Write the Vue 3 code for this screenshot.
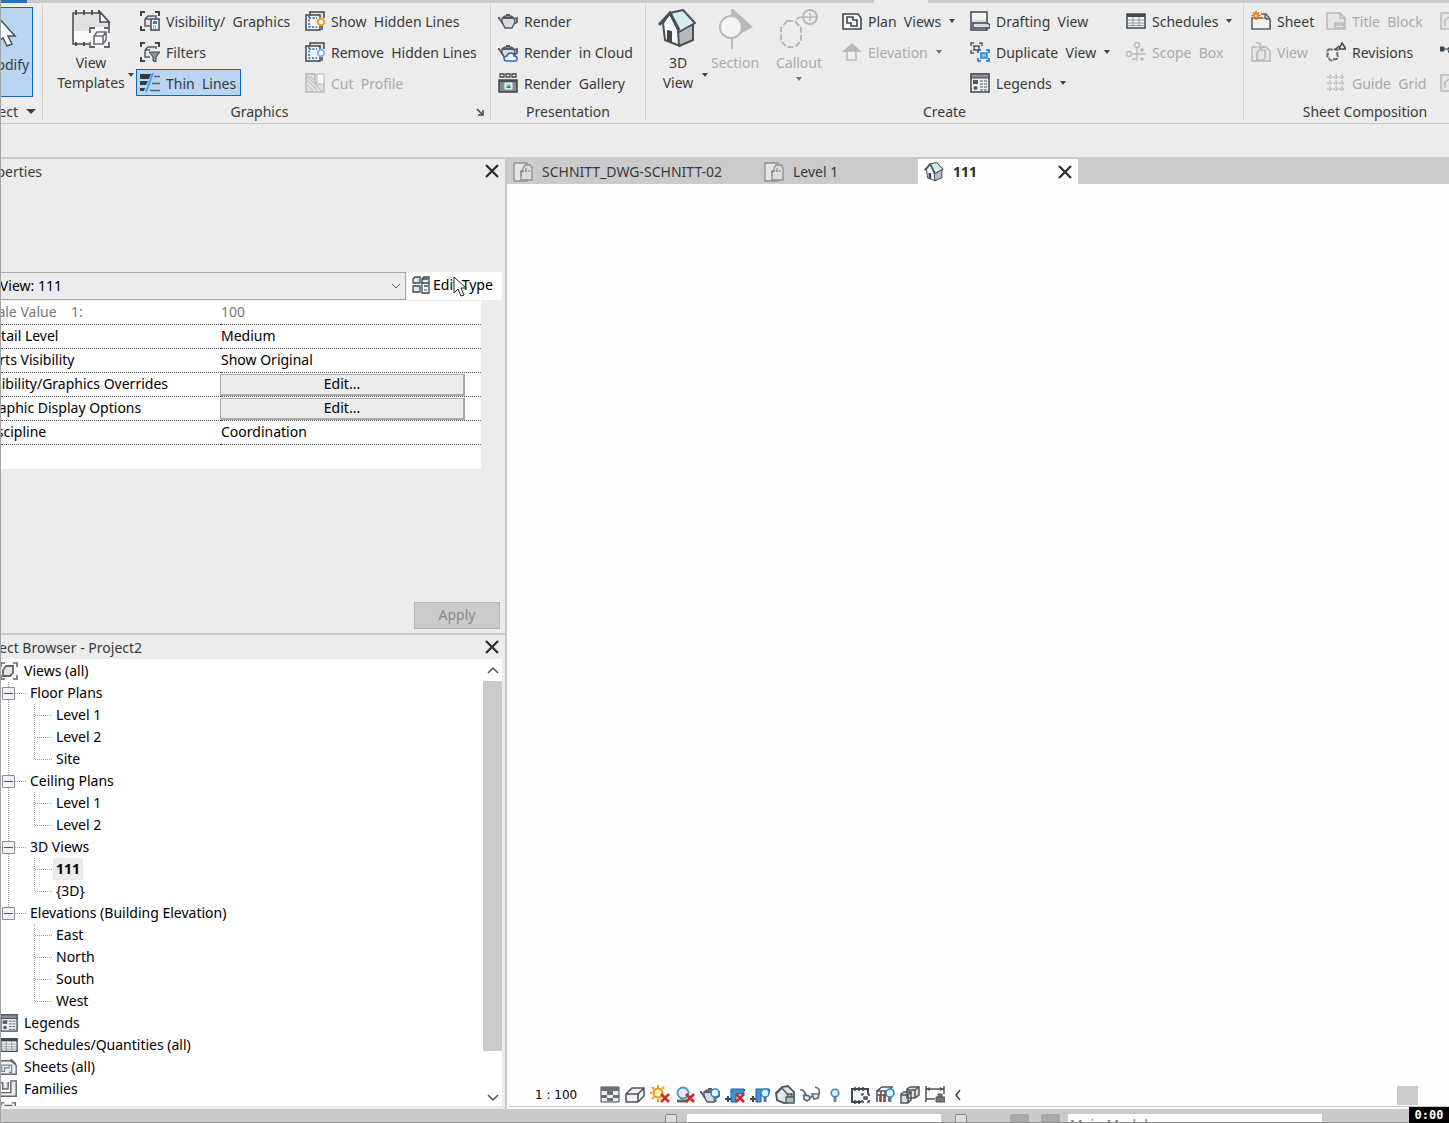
<script setup>
import { ref } from 'vue'

const D = '#3f4650'
const G = '#b9b9b9'

const house = (s) => `<g ${s}><path d="M5 14 12 4l10 11v22l-15-6z" fill="#f7f8f9" stroke="#4b5159" stroke-width="2" stroke-linejoin="round"/><path d="M20 22l15-7v16l-14 6z" fill="#b4bac4" stroke="#4b5159" stroke-width="2" stroke-linejoin="round"/><path d="M12 4 25 1l12 13-16 9z" fill="#d6ecef" stroke="#4b5159" stroke-width="2" stroke-linejoin="round"/><path d="M1 16 12 4l9 17" fill="none" stroke="#4b5159" stroke-width="3"/><path d="M9 21l5 1v12l-5-2z" fill="#3f4650"/></g>`
const brackets = `<path d="M1 5V1h4M15 1h4v4M1 15v4h4" fill="none" stroke="${D}" stroke-width="2"/><path d="M5 8l3-3h8v2M5 8v7h5M5 8h5" fill="#dfe2e4" stroke="#555c66" stroke-width="1.5"/>`
const hidden = (c) => `<path d="M5 4V1h14v6" fill="#dfe4e8" stroke="${D}" stroke-width="1.5"/><path d="M1 4h14v15H1z" fill="#f3f4f5" stroke="${D}" stroke-width="1.5"/><path d="M4 5v11h8M4 7h8" fill="none" stroke="#1668b5" stroke-width="1.5" stroke-dasharray="2 1.5"/><circle cx="16" cy="11" r="3.2" fill="#fff" stroke="${c}" stroke-width="2"/><path d="M15 15h3v4h-3z" fill="#6b7078"/>`
const teapot = `<path d="M4 7c3-3 9-3 12 0l1 4-3 6H7L4 11z" fill="#d9dce0" stroke="#555c66" stroke-width="1.4"/><path d="M5 13 1 7H0M16 8l3-1v4l-3 2M4 7h12M8 4h4" fill="none" stroke="#555c66" stroke-width="1.8"/>`
const bulb = `<circle cx="15" cy="8" r="4" fill="#e8f4ff" stroke="#2f86d6" stroke-width="1.600"/><path d="M13.500 12h3v5h-3z" fill="#5b7690"/>`
const cross = `<path d="M11 9l8 8M19 9l-8 8" stroke="#cf2a27" stroke-width="2.600"/>`
const pipe = `<path d="M0 14h6M3 11v6M14 5h6" stroke="${D}" stroke-width="2"/><path d="M6 17V4h13v5h-8v8z" fill="#3d94d8" stroke="#2a5f92"/>`

const icons = {
  template: `<path d="M2 4h28l8 9v22H2z" fill="#dfe1e3" stroke="#4b5159" stroke-width="1.6"/><path d="M3 22h34v12H3z" fill="#fafafa"/><path d="M29 3v10h9z" fill="#fff" stroke="#4b5159" stroke-width="1.6"/><path d="M5 1v5M13 1v5M21 1v5M28 1v4M5 33v4M13 33v4" stroke="#4b5159" stroke-width="2"/><path d="M18 18h22v21H18z" fill="#f7f7f7"/><path d="M19 24v-5h5M33 19h5v5M38 33v5h-5M24 38h-5v-5" fill="none" stroke="#62676f" stroke-width="1.8"/><path d="M23 27l3-4h9v8l-3 4h-9zM23 27h9v8M32 27l3-4" fill="#fff" stroke="#6c7178" stroke-width="1.600"/>`,
  visibility: brackets + `<path d="M11 8h8v11h-8z" fill="#fff" stroke="${D}" stroke-width="1.5"/><path d="M13 10h4v3h-4z" fill="#2582d2"/><path d="M13 15h4M13 17h4" stroke="${D}" stroke-dasharray="1 1"/>`,
  filters: brackets + `<path d="M9 10h11l-4 5v5l-3-1v-4z" fill="#8a9098" stroke="${D}"/>`,
  thin: `<path d="M0 1h11l-2 5H0zM0 8h8l-2 4H0zM0 15h5l-1 3H0z" fill="#333a42"/><path d="M14 3.500h6M12 10.500h8M10 17.500h10" stroke="#59616b" stroke-width="1.5"/><path d="M13 0 6 19" stroke="#45a2ee" stroke-width="2"/>`,
  show: hidden('#f59a1c'),
  remove: hidden('#78b9f0'),
  cut: `<path d="M1 1h9v9h9v9H1z" fill="#e0e0e0" stroke="${G}" stroke-width="1.500"/><path d="M2 3l9 9M2 7l10 10M5 3l4 4M2 12l6 6M11 12l6 6" stroke="${G}"/><path d="M12 1h7v10h-7z" fill="#fafafa" stroke="${G}"/>`,
  render: teapot,
  cloud: teapot + `<path d="M8 19c-3-1-2-5 1-5 1-4 7-4 7 0 4 0 4 5 1 5z" fill="#f4f8ff" stroke="#2a62c4" stroke-width="1.5"/>`,
  gallery: `<path d="M2 1h4v3H2zM8 1h4v3H8zM14 1h4v3h-4z" fill="#f5f5f5" stroke="${D}" stroke-width="1.300"/><path d="M1 7h18v12H1z" fill="#828b94" stroke="${D}" stroke-width="1.5"/><path d="M1 7h18v2H1z" fill="#444b54"/><path d="M7 10h7v6H7z" fill="#a8d5e8" stroke="#fff"/><path d="M8 15l3-3 2 3z" fill="#2f8a51"/>`,
  house: house(''),
  houseSmall: house('transform="scale(.51)"'),
  section: `<path d="M18 0 38 18 18 29v11h-2V0z" fill="#b9b9b9"/><circle cx="16" cy="18" r="11" fill="#f4f4f4" stroke="#b9b9b9" stroke-width="2"/>`,
  callout: `<path d="M8 12h8l6 7v13l-6 6H8l-6-6V19z" fill="none" stroke="#b9b9b9" stroke-width="2" stroke-dasharray="6 2"/><circle cx="31" cy="8" r="7" fill="none" stroke="#b9b9b9" stroke-width="2"/><path d="M17 10l5-2h16M31 4v8" fill="none" stroke="#b9b9b9" stroke-width="1.5"/>`,
  plan: `<path d="M1 3h15l3 4v11H1z" fill="#f2f3f4" stroke="${D}" stroke-width="1.6"/><path d="M5 6h6v3h4v6H9v-3H5z" fill="none" stroke="${D}" stroke-width="1.6"/>`,
  elevation: `<path d="M10 1 20 10H0z" fill="#b9b9b9"/><path d="M5 9h9v9H5z" fill="#f0f0f0" stroke="#b9b9b9" stroke-width="1.6"/>`,
  drafting: `<path d="M1 1h16v18H1z" fill="#f2f3f4" stroke="${D}" stroke-width="1.5"/><path d="M2 9h14v4H2z" fill="#d5dadf"/><path d="M3 12h14l3 2v3H3z" fill="#d9dce0" stroke="${D}" stroke-width="1.500"/>`,
  duplicate: `<path d="M1 4V1h3M9 1h3v3M1 8v3h3" fill="none" stroke="#555" stroke-width="1.5"/><path d="M4 4h5v4H4z" fill="none" stroke="#555" stroke-width="1.500"/><path d="M8 11V8h3M16 8h3v3M19 16v3h-3M11 19H8v-3" fill="none" stroke="#0e6cc0" stroke-width="1.600"/><path d="M11 11h6v5h-6z" fill="#7fc1f4" stroke="#2582d2" stroke-width="1.500"/>`,
  legend: `<path d="M1 1h18v18H1z" fill="#eceef0" stroke="${D}" stroke-width="1.5"/><path d="M1 1h18v4H1z" fill="#89919b" stroke="${D}"/><path d="M3 7h5v4H3z" fill="#505863"/><circle cx="5.500" cy="15" r="2" fill="#505863"/><path d="M10 8h7M10 11h7M10 14h3M14 14h3M10 17h7" stroke="#505863" stroke-dasharray="3 1"/>`,
  schedule: `<path d="M1 3h18v14H1z" fill="#f4f5f6" stroke="${D}" stroke-width="1.500"/><path d="M1 3h18v3H1z" fill="#414953"/><path d="M7 6v11M2 9h16M2 12h16M2 14.500h16M13 6v11" stroke="#8e96a0"/>`,
  scope: `<g fill="none" stroke="${G}" stroke-width="1.300"><circle cx="11" cy="3" r="2.500"/><circle cx="3" cy="12" r="2.500"/><path d="M11 6v13M6 12h14M16 6v4M14 8h4M16 15v4M14 17h4M6 17h4"/></g>`,
  sheet: `<path d="M1 7h14l4 4v7H1z" fill="#f1f3f4" stroke="#5a616a" stroke-width="1.600"/><path d="M10 3h5l4 5v10M14 3v5h5" fill="#f1f3f4" stroke="#5a616a" stroke-width="1.500"/><path d="M2 8h13v9H2z" fill="#f1f3f4"/><path d="M5 0v9M.5 4.500h9M2 1.500l6 6M8 1.500l-6 6" stroke="#ee6a13" stroke-width="1.700"/><circle cx="5" cy="4.500" r="1.500" fill="#ffd76e"/>`,
  place: `<path d="M1 5h5M12 5h3l4 4v10H1V5" fill="#e6e6e6" stroke="${G}" stroke-width="1.500"/><path d="M6 11l2-3h6v8l-2 2H6zM5 1c4-1 5 2 5 5M7 4l3 3 3-3" fill="none" stroke="${G}" stroke-width="1.6"/>`,
  title: `<path d="M1 2h13l5 5v11H1zM14 2v5h5" fill="#e6e6e6" stroke="${G}" stroke-width="1.500"/><path d="M9 12h9v5H9zM9 14h9" fill="none" stroke="${G}" stroke-width="1.500"/>`,
  revision: `<path d="M2 8c2-2 4 0 5 0 3-2 6 0 4 4 2 3 0 6-3 5-2 3-5 1-5-1-2-1-2-3-1-4-1-1-1-3 0-4z" fill="#f1f1f1" stroke="#6c727a" stroke-width="2" stroke-dasharray="5 1"/><path d="M9 8l4-4M16 1l4 6h-7z" fill="none" stroke="${D}" stroke-width="1.500"/>`,
  grid: `<path d="M4 1v18M10 1v18M16 1v18M1 4h18M1 10h18M1 16h18" stroke="${G}" stroke-width="1.300" stroke-dasharray="2 1"/>`,
  matchline: `<path d="M1 2h18v16H1z" fill="#e6e6e6" stroke="${G}" stroke-width="1.500"/><path d="M5 15V9l4-3" fill="none" stroke="${G}" stroke-width="1.500"/>`,
  viewref: `<path d="M0 5h4v4H0zM4 7h4" fill="${D}" stroke="${D}"/><circle cx="12" cy="8" r="4" fill="none" stroke="${D}"/>`,
  doc: `<path d="M1 1h13v18H1z" fill="#e2e4e5" stroke="#8d9093" stroke-width="1.3"/><path d="M10 6l2-3h5l2 3v12H8V9h2z" fill="#dadcde" stroke="#8d9093" stroke-width="1.3"/><path d="M8 9v5M9 9h9M13 6v4" fill="none" stroke="#777" stroke-dasharray="2 1"/>`,
  type: `<path d="M2 4l2-2h5v6H2zM11 4l2-2h5v6M2 11h7v6H2zM2 8V4M11 8V4h6" fill="#d7eaf0" stroke="${D}" stroke-width="1.300"/><path d="M11 8h7v10h-7z" fill="#fff" stroke="${D}" stroke-width="1.300"/><path d="M13 10h4v2h-4z" fill="#2582d2"/><path d="M13 15h3" stroke="${D}"/>`,
  views: `<path d="M1 5V1h4M13 1h4v4M17 13v4h-4M5 17H1v-4" fill="none" stroke="#62676f" stroke-width="1.6"/><path d="M3 8l3-4h7v7l-3 3H3z" fill="#dfe9ea" stroke="#62676f" stroke-width="1.8"/>`,
  sheets: `<path d="M0 3h12l6 5v10H0zM12 1l5 5v2" fill="#edf1f3" stroke="#62676f" stroke-width="1.5"/><path d="M2 8h8v3H5v4H2zM10 8h3v8h-3" fill="none" stroke="#7a8796" stroke-width="1.3"/>`,
  families: `<path d="M0 3h3v7h6V3h1M12 1h6v17H0v-4h12z" fill="#e9ecee" stroke="#62676f" stroke-width="1.6"/>`,
  detail: `<path d="M1 2h18v15H1z" fill="#eee" stroke="${D}"/><path d="M1 2h18v4H1zM1 10h6v3H1zM13 10h6v3h-6zM7 6h6v4H7zM7 13h6v3H7z" fill="#66707a"/>`,
  box: `<path d="M1 9l6-6h12v8l-6 6H1zM1 9h12v8M13 9l6-6" fill="#f2f2f2" stroke="#50565e" stroke-width="1.600"/>`,
  sun: `<circle cx="8" cy="8" r="4.500" fill="#fff3b0" stroke="#e79a20" stroke-width="2"/><path d="M8 0v3M8 14v3M0 8h2M2 2l2 2M14 2l-2 2M2 14l2-2" stroke="#e79a20" stroke-width="2"/>` + cross,
  shadow: `<circle cx="8" cy="8" r="5.500" fill="#d7edfc" stroke="#4a90cf" stroke-width="1.800"/><path d="M2 16h11" stroke="#666" stroke-width="3"/>` + cross,
  showRender: teapot + bulb,
  crop: pipe + cross,
  cropShow: pipe + bulb,
  lock3d: `<path d="M1 8 7 2l6-1 6 6v9l-10 2-7-3z" fill="#e5e7e8" stroke="#50565e" stroke-width="1.800"/><path d="M1 9l6-6 6 7" fill="none" stroke="#50565e" stroke-width="1.500"/><path d="M11 12h8v6h-8zM13 12V9h4v3" fill="#9fc3c7" stroke="#50565e" stroke-width="1.300"/>`,
  glasses: `<g fill="#e9f2f7" stroke="#5e6b78" stroke-width="1.700"><path d="M0 5h3l4 6M15 2c4 1 5 3 4 7M9 13l4-2" fill="none"/><path d="M4 10l5 1 1 3-3 2-3-2zM12 9h7l-1 4-4 1z"/></g>`,
  reveal: `<circle cx="10" cy="8" r="3.700" fill="#e8f4ff" stroke="#2f86d6" stroke-width="1.600"/><path d="M8.500 12h3v5h-3z" fill="#6b8094"/>`,
  temp: `<path d="M2 4h16v13H2z" fill="#f5f5f5" stroke="${D}" stroke-width="2"/><path d="M5 2v4M9 2v4M13 2v4M5 15v4M9 15v4" stroke="${D}" stroke-width="1.500"/><path d="M11 8h9v11h-9z" fill="#fff"/><path d="M12 11V9h2M17 9h2v2M19 15v2h-2M14 17h-2v-2M14 12h3v2h-3z" fill="none" stroke="${D}" stroke-width="1.500"/>`,
  analytic: `<path d="M2 17V6l5-4h10l-3 4v10M2 6h12M2 10h12M6 6v11M10 6v11" fill="none" stroke="#50565e" stroke-width="1.600"/><path d="M5 9v8M9 9v8" stroke="#b3332f" stroke-width="1.5"/>` + bulb,
  displace: `<path d="M7 4l3-2h9v8l-4 3H7zM7 5h8v8M15 5l4-3M1 9l3-2h7v8l-3 3H1zM1 10h7v8M8 10l3-3" fill="#dcdee0" stroke="#50565e" stroke-width="1.500"/>`,
  constraint: `<path d="M1 1v16M19 1v8M1 4h18M1 14h9" fill="none" stroke="#50565e" stroke-width="1.500"/><path d="M1 4l4-2v4zM19 4l-4-2v4z" fill="#50565e"/><path d="M11 12h9v5h-9zM13 12V9h4v3" fill="#777" stroke="#555"/>`,
  close: `<path d="M4 4l12 12M16 4 4 16" stroke="#333" stroke-width="2.400"/>`
}

const graphicsA = [['visibility', 'Visibility/  Graphics'], ['filters', 'Filters'], ['thin', 'Thin  Lines']]
const graphicsB = [['show', 'Show  Hidden Lines'], ['remove', 'Remove  Hidden Lines'], ['cut', 'Cut  Profile', true]]
const presentation = [['render', 'Render'], ['cloud', 'Render  in Cloud'], ['gallery', 'Render  Gallery']]
const createA = [['plan', 'Plan  Views', false, true], ['elevation', 'Elevation', true, true]]
const createB = [['drafting', 'Drafting  View'], ['duplicate', 'Duplicate  View', false, true], ['legend', 'Legends', false, true]]
const createC = [['schedule', 'Schedules', false, true], ['scope', 'Scope  Box', true]]
const sheetA = [['sheet', 'Sheet'], ['place', 'View', true]]
const sheetB = [['title', 'Title  Block', true], ['revision', 'Revisions'], ['grid', 'Guide  Grid', true]]
const sheetC = [['matchline', '', true], ['viewref', ''], ['matchline', '', true]]

const groups = [
  { title: 'Graphics', cls: 'g-graphics', launcher: true, big: [{ icon: 'template', lines: ['View', 'Templates'], side: true, cls: 'b-template' }], cols: [{ cls: 'c-vis', items: graphicsA }, { cls: 'c-hidden', items: graphicsB }] },
  { title: 'Presentation', cls: 'g-presentation', big: [], cols: [{ cls: '', items: presentation }] },
  { title: 'Create', cls: 'g-create', big: [
    { icon: 'house', lines: ['3D', 'View'], side: true, cls: 'b-3d' },
    { icon: 'section', lines: ['Section'], off: true, cls: 'b-section' },
    { icon: 'callout', lines: ['Callout'], off: true, below: true, cls: 'b-callout' }
  ], cols: [{ cls: 'c-plan', items: createA }, { cls: 'c-draft', items: createB }, { cls: '', items: createC }] },
  { title: 'Sheet Composition', cls: 'g-sheet', big: [], cols: [{ cls: 'c-sheet', items: sheetA }, { cls: 'c-title', items: sheetB }, { cls: '', items: sheetC }] }
]

const tabs = [
  { icon: 'doc', label: 'SCHNITT_DWG-SCHNITT-02', cls: 'wide' },
  { icon: 'doc', label: 'Level 1', cls: '' },
  { icon: 'houseSmall', label: '111', cls: 'current' }
]

const properties = [
  { name: 'Scale Value    1:', value: '100', muted: true },
  { name: 'Detail Level', value: 'Medium' },
  { name: 'Parts Visibility', value: 'Show Original' },
  { name: 'Visibility/Graphics Overrides', edit: true },
  { name: 'Graphic Display Options', edit: true },
  { name: 'Discipline', value: 'Coordination' }
]

const branches = [
  { name: 'Floor Plans', items: ['Level 1', 'Level 2', 'Site'] },
  { name: 'Ceiling Plans', items: ['Level 1', 'Level 2'] },
  { name: '3D Views', items: ['111', '{3D}'] },
  { name: 'Elevations (Building Elevation)', items: ['East', 'North', 'South', 'West'] }
]
const roots = [['legend', 'Legends'], ['schedule', 'Schedules/Quantities (all)'], ['sheets', 'Sheets (all)'], ['families', 'Families'], ['views', 'Groups']]

const viewControls = ['detail', 'box', 'sun', 'shadow', 'showRender', 'crop', 'cropShow', 'lock3d', 'glasses', 'reveal', 'temp', 'analytic', 'displace', 'constraint']
const viewType = ref('v111')
</script>

<template>
  <div class="app">
    <div class="tabstrip"><span class="file"></span><span class="active-mark"></span></div>

    <div class="ribbon">
      <section class="group g-select">
        <div class="tools">
          <button class="modify">
            <svg width="26" height="34" viewBox="0 0 26 34"><path d="M4 1v25l5-4 4 8 5-2-4-8h7z" fill="#fff" stroke="#4b5159" stroke-width="1.5" /></svg>
            <span>Modify</span>
          </button>
        </div>
        <div class="title">Select<i class="caret large"></i></div>
      </section>
      <section v-for="g in groups" :key="g.title" class="group" :class="g.cls">
        <div class="tools">
          <button v-for="b in g.big" :key="b.icon" class="big" :class="[b.cls, { off: b.off }]">
            <svg width="40" height="40" viewBox="0 0 40 40" v-html="icons[b.icon]"></svg>
            <span v-for="l in b.lines" :key="l">{{ l }}</span>
            <i v-if="b.side" class="caret beside"></i>
            <i v-if="b.below" class="caret below"></i>
          </button>
          <div v-for="(c, i) in g.cols" :key="i" class="col" :class="c.cls">
            <button v-for="(t, j) in c.items" :key="j" class="tool" :class="{ off: t[2], on: t[0] === 'thin' }">
              <svg width="20" height="20" viewBox="0 0 20 20" v-html="icons[t[0]]"></svg>
              <span>{{ t[1] }}</span>
              <i v-if="t[3]" class="caret"></i>
            </button>
          </div>
        </div>
        <div class="title">
          <span>{{ g.title }}</span>
          <svg v-if="g.launcher" class="launcher" width="8" height="8" viewBox="0 0 8 8"><path d="M1 1l5 5M7 2v5H2" fill="none" stroke="#444" stroke-width="1.500" /></svg>
        </div>
      </section>
    </div>

    <div class="options"></div>

    <div class="workspace">
      <aside class="sidebar">
        <section class="panel props">
          <header><h2 class="h-props">Properties</h2><button class="x" aria-label="Close"><svg width="20" height="20" viewBox="0 0 20 20" v-html="icons.close"></svg></button></header>
          <div class="type-row">
            <label class="combo">
              <select v-model="viewType" aria-label="View type"><option value="v111">3D View: 111</option></select>
              <svg width="10" height="6" viewBox="0 0 10 6"><path d="M1 1l4 4 4-4" fill="none" stroke="#555" /></svg>
            </label>
            <button class="edit-type">
              <svg width="20" height="20" viewBox="0 0 20 20" v-html="icons.type"></svg>Edit Type
              <svg class="pointer" width="14" height="22" viewBox="0 0 14 22"><path d="M1 1v16l4-4 3 7 3-1-3-7h5z" fill="#fff" stroke="#222" /></svg>
            </button>
          </div>
          <table>
            <tbody>
              <tr v-for="p in properties" :key="p.name" :class="{ muted: p.muted }">
                <th scope="row">{{ p.name }}</th>
                <td><button v-if="p.edit" class="edit">Edit...</button><template v-else>{{ p.value }}</template></td>
              </tr>
              <tr class="blank"><th></th><td></td></tr>
            </tbody>
          </table>
          <button class="apply" disabled>Apply</button>
        </section>

        <section class="panel browser">
          <header><h2 class="h-browser">Project Browser - Project2</h2><button class="x" aria-label="Close"><svg width="20" height="20" viewBox="0 0 20 20" v-html="icons.close"></svg></button></header>
          <div class="tree-wrap">
            <div class="tree">
              <div class="node root"><svg width="18" height="18" viewBox="0 0 18 18" v-html="icons.views"></svg><span>Views (all)</span></div>
              <template v-for="(b, i) in branches" :key="b.name">
                <div class="node">
                  <button class="toggle" :aria-label="'Collapse ' + b.name">
                    <svg width="26" height="22" viewBox="0 0 26 22">
                      <path :d="i < 3 ? 'M7.500 0V22M14 11.500H26' : 'M7.500 0V11M14 11.500H26'" fill="none" stroke="#a0a0a0" stroke-dasharray="1 1" />
                      <path d="M1.500 5.500h12v12h-12z" fill="#f4f4f4" stroke="#8d8d8d" /><path d="M3 11.500h9" stroke="#3b55a5" />
                    </svg>
                  </button>
                  <span class="branch">{{ b.name }}</span>
                </div>
                <div v-for="(n, j) in b.items" :key="n" class="node">
                  <svg width="52" height="22" viewBox="0 0 52 22">
                    <path :d="(i < 3 ? 'M7.500 0V22' : '') + (j < b.items.length - 1 ? 'M33.500 0V22' : 'M33.500 0V11') + 'M34 11.500H52'" fill="none" stroke="#a0a0a0" stroke-dasharray="1 1" />
                  </svg>
                  <span class="leaf" :class="{ open: n === '111' }">{{ n }}</span>
                </div>
              </template>
              <div v-for="r in roots" :key="r[1]" class="node root"><svg width="18" height="18" viewBox="0 0 20 20" v-html="icons[r[0]]"></svg><span>{{ r[1] }}</span></div>
            </div>
            <div class="scroll">
              <svg width="19" height="22" viewBox="0 0 19 22"><path d="M5 14l5-5 5 5" fill="none" stroke="#555" stroke-width="1.5" /></svg>
              <div class="track"><div class="thumb"></div></div>
              <svg width="19" height="18" viewBox="0 0 19 18"><path d="M5 7l5 5 5-5" fill="none" stroke="#555" stroke-width="1.5" /></svg>
            </div>
          </div>
        </section>
      </aside>

      <main class="view">
        <nav class="tabs">
          <div v-for="t in tabs" :key="t.label" class="tab" :class="t.cls">
            <svg width="20" height="20" viewBox="0 0 20 20" v-html="icons[t.icon]"></svg>
            <span>{{ t.label }}</span>
            <button v-if="t.cls === 'current'" class="x" aria-label="Close view"><svg width="20" height="20" viewBox="0 0 20 20" v-html="icons.close"></svg></button>
          </div>
        </nav>
        <div class="canvas"></div>
        <div class="controls">
          <button class="scale">1 : 100</button>
          <button v-for="c in viewControls" :key="c" class="ctl" :aria-label="c"><svg width="20" height="20" viewBox="0 0 20 20" v-html="icons[c]"></svg></button>
          <svg class="more" width="8" height="12" viewBox="0 0 8 12"><path d="M6 1 2 6l4 5" fill="none" stroke="#444" stroke-width="1.500" /></svg>
          <span class="corner"></span>
        </div>
      </main>
    </div>

    <footer>
      <i class="mark m1"></i>
      <input class="field" aria-label="Workset" />
      <i class="mark m2"></i><i class="mark dark m3"></i><i class="mark dark m4"></i>
      <select class="field model" aria-label="Design option"><option>Main Model</option></select>
    </footer>
    <div class="timer">0:00</div>
  </div>
</template>

<style>
body { margin: 0; overflow: hidden; }
</style>

<style scoped>
* { box-sizing: border-box; }
.app {
  position: relative; display: flex; flex-direction: column; height: 100vh; overflow: hidden;
  background: #ececec; border-left: 1px solid #a3a3a3;
  font: 14px/20px "Noto Sans", "Open Sans", sans-serif; color: #3a3a3a;
}
button { font: inherit; color: inherit; background: none; border: 0; padding: 0; margin: 0; text-align: left; }
svg { display: block; flex: none; }
.tabstrip { flex: none; display: flex; height: 3px; background: #cacaca; }
.file { width: 26px; background: #2273bd; }
.active-mark { width: 54px; margin-left: 847px; background: #ececec; }

.ribbon { flex: none; display: flex; height: 121px; padding-top: 1px; border-bottom: 1px solid #cacaca; overflow: hidden; }
.group { flex: none; display: flex; flex-direction: column; margin-bottom: 2px; border-right: 1px solid #d2d2d2; }
.tools { display: flex; height: 97px; padding-top: 3px; }
.title { display: flex; align-items: center; justify-content: center; height: 20px; padding-top: 1px; }
.g-select { width: 42px; overflow: hidden; }
.g-select .tools { justify-content: flex-end; padding-right: 9px; }
.g-select .title { justify-content: flex-end; padding-right: 6px; gap: 8px; }
.modify { display: flex; flex-direction: column; align-items: center; flex: none; gap: 5px; width: 53px; height: 90px; padding-top: 8px; border: 1px solid #1267b4; background: #b8d5f2; }
.g-graphics { width: 448px; }
.g-graphics .title span { flex: 1; text-align: center; }
.launcher { margin-right: 6px; }
.g-presentation { width: 155px; }
.g-presentation .tools, .g-sheet .tools { padding-left: 3px; }
.g-create { width: 598px; }
.g-sheet { width: 243px; }

.big { position: relative; display: flex; flex-direction: column; align-items: center; flex: none; height: 90px; padding-top: 2px; line-height: 20px; }
.big svg { margin-bottom: 4px; }
.b-template { width: 93px; padding-left: 3px; }
.b-3d { width: 64px; }
.b-section { width: 50px; }
.b-callout { width: 78px; }
.col { display: flex; flex-direction: column; align-items: flex-start; gap: 4px; flex: none; }
.c-vis { width: 165px; }
.c-plan { width: 128px; }
.c-draft { width: 156px; }
.c-sheet { width: 75px; }
.c-title { width: 114px; }
.tool { display: flex; align-items: center; gap: 6px; height: 27px; padding: 0 4px; border: 1px solid transparent; border-left-width: 0; white-space: pre; }
.tool span { padding-top: 2px; }
.tool.on { border: 1px solid #1267b4; background: #b8d5f2; padding-left: 3px; }
.off { color: #ababab; }
.caret { flex: none; width: 0; height: 0; border: 3px solid transparent; border-top: 4px solid #444; border-bottom: 0; margin-left: 2px; }
.caret.large { border-width: 5px 5px 0; margin: 0; }
.caret.beside { position: absolute; right: 2px; bottom: 20px; }
.caret.below { margin: 4px 0 0; }
.off .caret { border-top-color: #777; }

.options { flex: none; height: 35px; border-bottom: 2px solid #cacaca; }
.workspace { flex: 1; display: flex; min-height: 0; }
.sidebar { flex: none; display: flex; flex-direction: column; width: 506px; border-right: 2px solid #cacaca; overflow: hidden; }
.panel { flex: 1 1 0; display: flex; flex-direction: column; min-height: 0; padding-right: 3px; }
.props { flex-basis: 2px; }
.panel header { flex: none; display: flex; align-items: center; justify-content: space-between; height: 24px; }
h2 { margin: 0 0 0 -27px; padding-top: 2px; font: inherit; white-space: nowrap; }
h2.h-browser { margin-left: -28px; }
.x { display: flex; }
.type-row { flex: none; display: flex; gap: 1px; height: 29px; margin-top: 89px; padding-bottom: 1px; color: #000; }
.combo { display: flex; align-items: center; width: 405px; border: 1px solid #a9a9a9; border-left: 0; padding-right: 4px; overflow: hidden; }
.combo select { flex: 1; appearance: none; margin-left: -23px; padding: 0; border: 0; background: none; font: inherit; color: inherit; outline: 0; }
.edit-type { position: relative; display: flex; align-items: center; gap: 2px; flex: 1; padding: 0 0 2px 4px; background: #fdfdfd; white-space: nowrap; }
.pointer { position: absolute; left: 46px; top: 4px; }
table { flex: none; width: 480px; border-collapse: collapse; table-layout: fixed; background: #fff; color: #000; }
tr { height: 24px; border-bottom: 1px dotted #555; }
tr.muted { height: 23px; color: #777; }
tr.blank { height: 25px; border-bottom: 0; }
th, td { padding: 0; font-weight: 400; text-align: left; line-height: 20px; white-space: pre; }
th { width: 220px; text-indent: -18px; overflow: hidden; }
.edit { display: block; width: 245px; height: 22px; margin: 1px 0 0 -1px; border: 1px solid #a9a9a9; border-right-width: 2px; border-bottom-width: 2px; background: #ececec; text-align: center; line-height: 18px; }
.apply { align-self: flex-end; width: 86px; height: 27px; margin: auto 2px 4px 0; border: 1px solid #b5b5b5; background: #cbcbcb; color: #8c8c8c; text-align: center; }

.browser { border-top: 2px solid #cacaca; padding-bottom: 3px; }
.tree-wrap { flex: 1; display: flex; min-height: 0; background: #fff; color: #000; }
.tree { flex: 1; padding-top: 1px; overflow: hidden; }
.node { display: flex; align-items: center; height: 22px; white-space: nowrap; }
.root svg { margin-left: -1px; }
.root span { padding-left: 6px; }
.branch { padding-left: 3px; }
.leaf { padding: 0 3px; line-height: 22px; }
.open { font-weight: 700; background: #ececec; }
.scroll { flex: none; display: flex; flex-direction: column; width: 19px; }
.track { flex: 1; }
.thumb { height: 91%; background: #cbcbcb; }

.view { flex: 1; display: flex; flex-direction: column; min-width: 0; background: #fefefe; }
.tabs { flex: none; display: flex; height: 25px; background: #cbcbcb; }
.tab { display: flex; align-items: center; gap: 9px; width: 160px; padding: 0 3px 0 6px; }
.tab.wide { width: 251px; }
.tab.current { background: #fefefe; font-weight: 700; color: #2b2b2b; }
.tab .x { margin-left: auto; }
.canvas { flex: 1; }
.controls { flex: none; display: flex; align-items: center; gap: 5px; height: 23px; margin: 0 0 2px 2px; padding: 0 31px 0 26px; border-bottom: 1px solid #c6c6c6; color: #000; }
.scale { width: 60px; font: 12px/20px "DejaVu Sans", sans-serif; }
.more { margin-left: 4px; }
.corner { width: 21px; height: 19px; margin-left: auto; background: #cbcbcb; }

footer { flex: none; display: flex; align-items: flex-start; height: 14px; padding: 5px 0 0 664px; background: #cacaca; border-bottom: 1px solid #8e8e8e; overflow: hidden; }
.mark { flex: none; width: 12px; height: 12px; border: 1px solid #8b8b8b; border-radius: 2px; background: #dedede; }
.mark.dark { width: 19px; background: #a9a9a9; border-color: #a9a9a9; }
.field { flex: none; width: 254px; height: 22px; margin: 0 0 0 10px; padding: 0; border: 0; border-radius: 0; background: #fff; appearance: none; outline: 0; }
.m2 { margin-left: 14px; }
.m3 { margin-left: 43px; }
.m4 { margin-left: 12px; }
.model { margin-left: 8px; padding-left: 2px; color: #777; font: 14px/20px "Noto Sans", sans-serif; }
.timer { position: absolute; right: 0; bottom: 0; width: 40px; height: 16px; background: #000; color: #fff; font: 700 12px/16px "DejaVu Sans Mono", monospace; text-align: center; }
</style>
